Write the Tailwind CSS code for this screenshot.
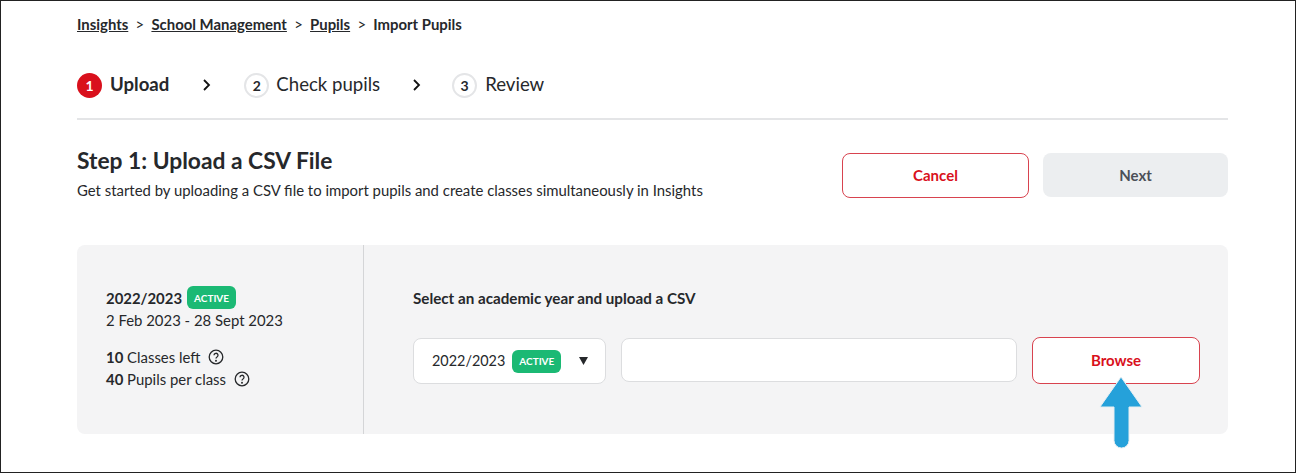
<!DOCTYPE html>
<html lang="en">

<head>
    <meta charset="UTF-8">
    <title>Import Pupils</title>
    <script src="https://cdn.jsdelivr.net/npm/@tailwindcss/browser@4"></script>
</head>

<body class="bg-white">
    <div class="relative w-[1296px] h-[473px] overflow-hidden border border-[#222] font-['Lato',sans-serif] text-[#26282b]">
        <div class="w-[1151px] ml-[76px]">
            <nav class="flex items-center h-[16px] mt-[15px] text-[14.9px] font-bold leading-none">
                <a href="#" class="underline">Insights</a>
                <span class="mx-[7.25px] font-normal">&gt;</span>
                <a href="#" class="underline">School Management</a>
                <span class="mx-[7.25px] font-normal">&gt;</span>
                <a href="#" class="underline">Pupils</a>
                <span class="mx-[7.25px] font-normal">&gt;</span>
                <span>Import Pupils</span>
            </nav>

            <div class="flex items-center h-[26px] mt-[40px] text-[18.6px]">
                <div class="flex items-center gap-[8px] font-bold">
                    <span class="flex items-center justify-center w-[25px] h-[25px] rounded-full bg-[#d9101c] text-white text-[14px]">1</span>
                    Upload
                </div>
                <svg class="ml-[33px]" width="10" height="12" viewBox="0 0 10 12" fill="none" stroke="#111" stroke-width="1.8"><path d="M2 1l5 5-5 5" /></svg>
                <div class="flex items-center gap-[7px] ml-[32px]">
                    <span class="flex items-center justify-center w-[25px] h-[25px] rounded-full bg-white border-2 border-[#e4e5e7] font-bold text-[14px]">2</span>
                    Check pupils
                </div>
                <svg class="ml-[32px]" width="10" height="12" viewBox="0 0 10 12" fill="none" stroke="#111" stroke-width="1.8"><path d="M2 1l5 5-5 5" /></svg>
                <div class="flex items-center gap-[8px] ml-[30px]">
                    <span class="flex items-center justify-center w-[25px] h-[25px] rounded-full bg-white border-2 border-[#e4e5e7] font-bold text-[14px]">3</span>
                    Review
                </div>
            </div>

            <div class="h-[2px] bg-[#e4e5e7] mt-[20px]"></div>

            <div class="flex justify-between items-start mt-[33px]">
                <div>
                    <h1 class="text-[22.8px] font-bold leading-[20px] mt-[-3px]">Step 1: Upload a CSV File</h1>
                    <p class="text-[14.9px] leading-[20px] mt-[10px]">Get started by uploading a CSV file to import pupils and create classes simultaneously in Insights</p>
                </div>
                <div class="flex gap-[14px]">
                    <button class="w-[187px] h-[45px] rounded-[8px] bg-white border border-[#d8434f] text-[#d9101c] text-[15px] font-bold">Cancel</button>
                    <button class="w-[185px] h-[44px] rounded-[8px] bg-[#eceef0] text-[#4b5058] text-[15px] font-bold">Next</button>
                </div>
            </div>

            <div class="flex h-[189px] mt-[45px] rounded-[8px] bg-[#f4f4f5]">
                <div class="w-[287px] border-r border-[#d4d5d7] pl-[29px] pt-[41px] text-[14.9px] leading-[22px]">
                    <div class="flex items-center gap-[5px]">
                        <span class="font-bold">2022/2023</span>
                        <span class="flex items-center h-[23px] px-[7px] rounded-[6px] bg-[#1bb974] text-white text-[10px] font-bold">ACTIVE</span>
                    </div>
                    <p>2 Feb 2023 - 28 Sept 2023</p>
                    <div class="flex items-center gap-[8px] mt-[15px]">
                        <span><b>10</b> Classes left</span>
                        <svg width="16" height="16" viewBox="0 0 16 16" fill="none" stroke="#26282b" stroke-width="1.3"><circle cx="8" cy="8" r="6.8" /><path d="M6 6.3a2 2 0 1 1 3 1.7c-.7.4-1 .8-1 1.6" /><circle cx="8" cy="11.7" r=".4" /></svg>
                    </div>
                    <div class="flex items-center gap-[8px]">
                        <span><b>40</b> Pupils per class</span>
                        <svg width="16" height="16" viewBox="0 0 16 16" fill="none" stroke="#26282b" stroke-width="1.3"><circle cx="8" cy="8" r="6.8" /><path d="M6 6.3a2 2 0 1 1 3 1.7c-.7.4-1 .8-1 1.6" /><circle cx="8" cy="11.7" r=".4" /></svg>
                    </div>
                </div>
                <div class="flex-1 pl-[49px] pr-[28px] pt-[43px]">
                    <p class="text-[15.2px] font-bold leading-[20px]">Select an academic year and upload a CSV</p>
                    <div class="flex items-start mt-[30px]">
                        <div class="flex items-center w-[193px] h-[46px] rounded-[8px] bg-white border border-[#dcdddf] pl-[18px] text-[14.4px]">
                            2022/2023
                            <span class="flex items-center h-[23px] ml-[7px] px-[7px] rounded-[6px] bg-[#1bb974] text-white text-[10px] font-bold">ACTIVE</span>
                            <svg class="ml-[18px]" width="9" height="8" viewBox="0 0 9 8" fill="#26282b"><path d="M0 0h9L4.500 8z" /></svg>
                        </div>
                        <div class="w-[396px] h-[44px] ml-[15px] rounded-[8px] bg-white border border-[#dcdddf]"></div>
                        <button class="w-[168px] h-[47px] ml-[15px] mt-[-1px] rounded-[8px] bg-white border border-[#d8434f] text-[#d9101c] text-[15px] font-bold">Browse</button>
                    </div>
                </div>
            </div>
        </div>

        <!-- annotation arrow over the Browse button -->
        <svg class="absolute left-[1095px] top-[372px]" width="50" height="80" viewBox="0 0 50 80">
            <path d="M25 4L46 34H33V67.500a7.500 7.500 0 0 1-15 0V34H4z" fill="#25a1da" stroke="#e6eef2" stroke-width="1" />
        </svg>
    </div>
</body>

</html>
